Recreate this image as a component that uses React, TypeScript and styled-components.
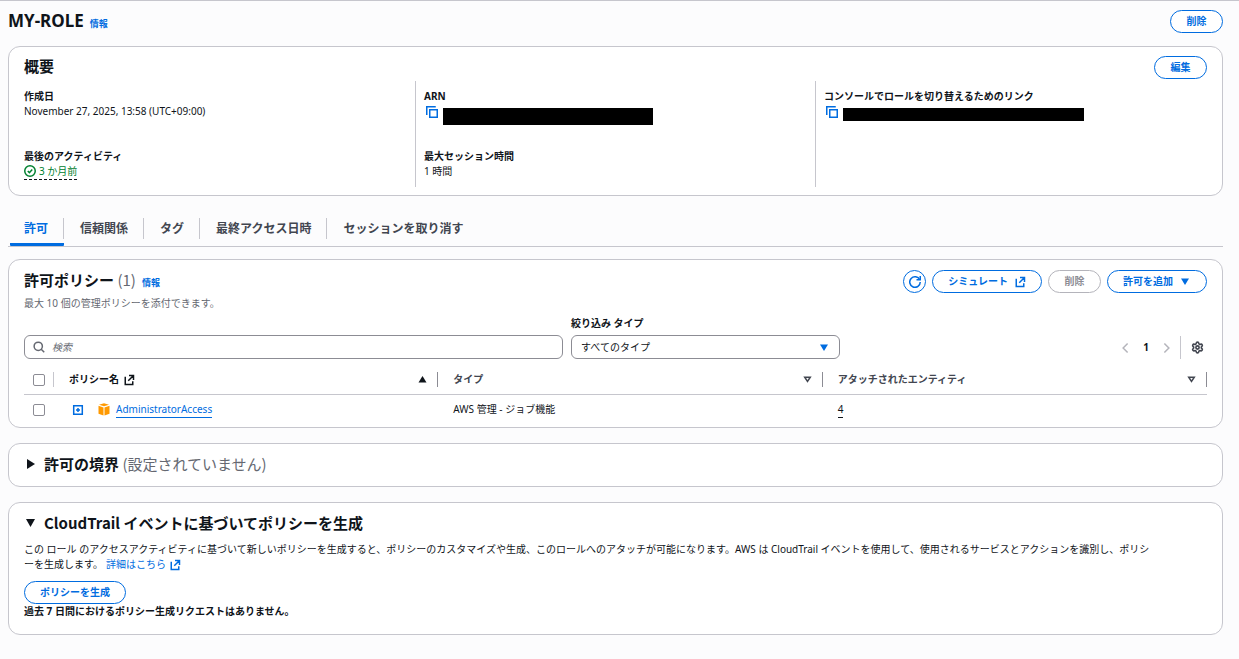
import React from 'react';
import styled, { createGlobalStyle } from 'styled-components';
import { Settings } from 'lucide-react';

const color = {
  text: '#0f141a',
  secondary: '#424650',
  muted: '#656871',
  blue: '#006ce0',
  line: '#c6c6cd',
  control: '#8c8c94',
  green: '#00802f',
  page: '#fcfcfd',
};

const GlobalStyle = createGlobalStyle`
  *, *::before, *::after { box-sizing: border-box; }
  body {
    margin: 0;
    background: ${color.page};
    color: ${color.text};
    font: 400 10px/15px "Noto Sans", "Noto Sans CJK JP", sans-serif;
  }
  button, input, select { font: inherit; color: inherit; }
  h1, h2, p, dl, dd { margin: 0; }
  svg { display: block; flex: none; }
`;

const Page = styled.main`
  border-top: 1px solid ${color.line};
  padding: 9px 16px 24px 8px;
`;

const Bar = styled.header`
  display: flex;
  justify-content: space-between;
  align-items: flex-start;
  height: 23px;
`;

const PageTitle = styled.h1`
  font-size: 17px;
  line-height: 22px;
`;

const Title = styled.h2`
  min-height: 23px;
  font-family: "Noto Sans CJK JP", sans-serif;
  font-size: 15px;
  line-height: 20px;
`;

const Light = styled.span`
  font-weight: 400;
  color: ${color.muted};
`;

const InfoLink = styled.a`
  margin-left: 6px;
  font-size: 9px;
  line-height: 9px;
  font-weight: 700;
  color: ${color.blue};
  text-decoration: none;
`;

const TextLink = styled.a<{ $underlined?: boolean }>`
  color: ${color.blue};
  text-decoration: none;
  border-bottom: ${(p) => (p.$underlined ? '1px solid' : '0')};
`;

const CountLink = styled(TextLink)`
  color: ${color.text};
`;

const Button = styled.button<{ $round?: boolean }>`
  display: inline-flex;
  align-items: center;
  justify-content: center;
  gap: 6px;
  height: 23px;
  min-width: ${(p) => (p.$round ? '23px' : '53px')};
  padding: 0 ${(p) => (p.$round ? '0' : '15px')};
  border: 1px solid ${color.blue};
  border-radius: 12px;
  background: #fff;
  color: ${color.blue};
  font-weight: 700;
  white-space: nowrap;
  &:disabled {
    border-color: #b4b4bb;
    color: ${color.control};
  }
`;

const Card = styled.section<{ $tall?: boolean }>`
  padding: ${(p) => (p.$tall ? '10px 15px 15px' : '10px 15px 9px')};
  border: 1px solid ${color.line};
  border-radius: 12px;
  background: #fff;
  & + & { margin-top: 15px; }
`;

const SummaryCard = styled(Card)`
  margin-top: 13px;
  padding: 9px 15px 8px;
`;

const Columns = styled.dl`
  display: flex;
  margin-top: 2px;
`;

const Column = styled.div`
  display: flex;
  flex: 1 1 0;
  flex-direction: column;
  gap: 30px;
  box-sizing: content-box;
  padding: 8px;
  border-left: 1px solid ${color.line};
  &:first-child {
    padding-left: 0;
    border-left: 0;
  }
  &:last-child { padding-right: 0; }
`;

const Term = styled.dt`
  font-weight: 700;
`;

const Value = styled.dd`
  display: flex;
  align-items: center;
  height: 15px;
`;

const Status = styled.span`
  display: inline-flex;
  align-items: center;
  gap: 3px;
  height: 17px;
  color: ${color.green};
  border-bottom: 1px dashed ${color.text};
`;

const IconButton = styled.button`
  display: inline-flex;
  align-items: center;
  justify-content: center;
  min-width: 12px;
  height: 15px;
  padding: 0;
  border: 0;
  background: none;
  color: ${color.secondary};
  &:disabled { color: #b4b4bb; }
`;

const CopyButton = styled(IconButton)`
  margin: 0 5px 0 2px;
  color: ${color.blue};
`;

const Redaction = styled.span<{ $w: number; $h: number }>`
  width: ${(p) => p.$w}px;
  height: ${(p) => p.$h}px;
  margin-top: ${(p) => p.$h - 7}px;
  background: #000;
`;

const Tabs = styled.div`
  display: flex;
  margin: 14px 0 12px;
  padding-left: 2px;
  border-bottom: 1px solid ${color.line};
`;

const Tab = styled.button<{ $active?: boolean }>`
  display: flex;
  height: 36px;
  padding: 8px 0 4px 16px;
  border: 0;
  border-bottom: 3px solid ${(p) => (p.$active ? color.blue : 'transparent')};
  border-radius: 1px;
  background: none;
  color: ${(p) => (p.$active ? color.blue : color.secondary)};
  font-size: 12px;
  line-height: 21px;
  font-weight: 700;
  &:first-child { padding-left: 14px; }
  span {
    padding-right: 15px;
    border-right: 1px solid ${color.line};
  }
  &:last-child span { border-right: 0; }
`;

const Actions = styled.div`
  display: flex;
  gap: 6px;
`;

const PolicyCard = styled(Card)`
  padding: 10px 15px 4px;
`;

const Description = styled.p`
  margin-top: 3px;
  color: ${color.muted};
`;

const Filters = styled.div`
  display: flex;
  align-items: flex-end;
  gap: 8px;
  margin-top: 5px;
`;

const SearchBox = styled.label`
  display: flex;
  align-items: center;
  flex: 0 1 539px;
  height: 24px;
  padding: 0 8px;
  gap: 7px;
  border: 1px solid ${color.control};
  border-radius: 6px;
  background: #fff;
  color: ${color.muted};
  input {
    flex: 1;
    min-width: 0;
    padding: 0;
    border: 0;
    outline: 0;
    background: none;
  }
  input::placeholder {
    color: ${color.muted};
    font-style: italic;
  }
`;

const Field = styled.div`
  display: flex;
  flex-direction: column;
  flex: 0 1 269px;
  gap: 4px;
  label { font-weight: 700; }
`;

const SelectBox = styled.div`
  display: grid;
  align-items: center;
  color: ${color.blue};
  select, svg { grid-area: 1 / 1; }
  select {
    height: 24px;
    padding: 0 9px;
    border: 1px solid ${color.control};
    border-radius: 6px;
    background: #fff;
    color: ${color.text};
    appearance: none;
  }
  svg {
    justify-self: end;
    margin-right: 10px;
    pointer-events: none;
  }
`;

const Pager = styled.nav`
  display: flex;
  align-items: center;
  gap: 9px;
  height: 23px;
  margin-left: auto;
  padding-right: 3px;
`;

const PagerRule = styled.span`
  align-self: stretch;
  width: 1px;
  margin-right: 1px;
  margin-left: -2px;
  background: ${color.line};
`;

const PageNumber = styled(IconButton)`
  color: ${color.text};
  font-weight: 700;
`;

const Table = styled.table`
  width: 100%;
  margin-top: 5px;
  border-collapse: collapse;
  table-layout: fixed;
  th, td {
    padding: 2px 0 0;
    text-align: left;
  }
  th { color: ${color.secondary}; }
  thead tr {
    height: 30px;
    border-bottom: 1px solid ${color.line};
  }
  tbody tr { height: 29px; }
`;

const CheckColumn = styled.col`
  width: 30px;
`;

const HeadCell = styled.div<{ $sorted?: boolean }>`
  display: flex;
  align-items: center;
  gap: 4px;
  height: 15px;
  padding-left: 15px;
  padding-right: 10px;
  border-right: 1px solid ${color.control};
  color: ${(p) => (p.$sorted ? color.text : 'inherit')};
  svg:last-child { margin-left: auto; }
`;

const CheckCell = styled.div<{ $ruled?: boolean }>`
  display: flex;
  align-items: center;
  height: 15px;
  padding-left: 9px;
  border-right: ${(p) => (p.$ruled ? `1px solid ${color.line}` : '0')};
`;

const Cell = styled.div`
  display: flex;
  align-items: center;
  padding-left: 15px;
`;

const PolicyName = styled(Cell)`
  gap: 6px;
  padding-left: 18px;
`;

const ExpandButton = styled(IconButton)`
  margin-right: 8px;
  color: ${color.blue};
`;

const Checkbox = styled.input.attrs({ type: 'checkbox' })`
  appearance: none;
  width: 12px;
  height: 12px;
  margin: 0;
  border: 1px solid ${color.control};
  border-radius: 2px;
  background: #fff;
`;

const Toggle = styled.button`
  display: flex;
  align-items: center;
  gap: 7px;
  padding: 0;
  border: 0;
  background: none;
  font-weight: 700;
  text-align: left;
`;

const Prose = styled.p`
  margin: 6px 0 9px;
  padding-right: 48px;
`;

const MoreLink = styled(TextLink)`
  display: inline-flex;
  align-items: center;
  gap: 3px;
  height: 15px;
  margin-left: 3px;
  vertical-align: top;
`;

const Note = styled.p`
  font-weight: 700;
`;

const ExternalIcon = () => (
  <svg width="12" height="12" viewBox="0 0 16 16" fill="none" stroke="currentColor" strokeWidth="2" aria-hidden="true">
    <path d="M3 3.5V14h10v-4.5M8 2h6v6M14 2 7 9" />
  </svg>
);

const CopyIcon = () => (
  <svg width="12" height="12" viewBox="0 0 16 16" fill="none" stroke="currentColor" strokeWidth="2" aria-hidden="true">
    <path d="M1 12V1h12" />
    <path d="M5 5h10v10H5z" />
  </svg>
);

const CheckIcon = () => (
  <svg width="12" height="12" viewBox="0 0 16 16" fill="none" stroke="currentColor" strokeWidth="2" aria-hidden="true">
    <circle cx="8" cy="8" r="7" />
    <path d="m5 8 2.2 2.2L11 6" />
  </svg>
);

const RefreshIcon = () => (
  <svg width="12" height="12" viewBox="0 0 16 16" fill="none" stroke="currentColor" strokeWidth="2" aria-hidden="true">
    <path d="M10 5h5V0" />
    <path d="M15 8a7 7 0 1 1-.7-3" />
  </svg>
);

const SearchIcon = () => (
  <svg width="12" height="12" viewBox="0 0 16 16" fill="none" stroke="currentColor" strokeWidth="2" aria-hidden="true">
    <circle cx="7" cy="7" r="5.5" />
    <path d="m11 11 4 4" />
  </svg>
);

const DownIcon = () => (
  <svg width="12" height="7" viewBox="0 0 12 7" fill="currentColor" aria-hidden="true">
    <path d="M2 .5h8L6 7z" />
  </svg>
);

const RightIcon = () => (
  <svg width="13" height="10" viewBox="0 0 13 10" fill="currentColor" aria-hidden="true">
    <path d="M3 0v10l8-5z" />
  </svg>
);

const OpenIcon = () => (
  <svg width="13" height="10" viewBox="0 0 13 10" fill="currentColor" aria-hidden="true">
    <path d="M2 1h9L6.500 9z" />
  </svg>
);

const SortedIcon = () => (
  <svg width="9" height="7" viewBox="0 0 9 7" fill="currentColor" aria-hidden="true">
    <path d="M4.5 0 8.5 6.5h-8z" />
  </svg>
);

const SortIcon = () => (
  <svg width="9" height="7" viewBox="0 0 9 7" fill="none" stroke="currentColor" strokeWidth="1.5" aria-hidden="true">
    <path d="M1.7 1.2h5.6L4.5 5.5z" />
  </svg>
);

const ChevronIcon = ({ right }: { right?: boolean }) => (
  <svg width="12" height="12" viewBox="0 0 16 16" fill="none" stroke="currentColor" strokeWidth="2" aria-hidden="true">
    <path d={right ? 'm4.5 2 6 6-6 6' : 'm11.5 2-6 6 6 6'} />
  </svg>
);

const PlusBoxIcon = () => (
  <svg width="12" height="12" viewBox="0 0 12 12" fill="none" stroke="currentColor" strokeWidth="1.5" aria-hidden="true">
    <path d="M1.7 1.7h8.6v8.6H1.7zM6 4v4M4 6h4" />
  </svg>
);

const BoxIcon = () => (
  <svg width="12" height="13" viewBox="0 0 12 13" fill="#ff9900" aria-hidden="true">
    <path d="M6 .3 11 1.8 6 3.3 1 1.8z" />
    <path d="M.5 2.7 5.5 4.4v8.1L.5 10.8zM11.5 2.7 6.5 4.4v8.1l5-1.7z" />
  </svg>
);

const tabs = ['許可', '信頼関係', 'タグ', '最終アクセス日時', 'セッションを取り消す'];

export default function App() {
  return (
    <>
      <GlobalStyle />
      <Page>
        <Bar>
          <PageTitle>
            MY-ROLE
            <InfoLink href="#info">情報</InfoLink>
          </PageTitle>
          <Button>削除</Button>
        </Bar>

        <SummaryCard>
          <Bar>
            <Title>概要</Title>
            <Button>編集</Button>
          </Bar>
          <Columns>
            <Column>
              <div>
                <Term>作成日</Term>
                <Value>November 27, 2025, 13:58 (UTC+09:00)</Value>
              </div>
              <div>
                <Term>最後のアクティビティ</Term>
                <Value>
                  <Status>
                    <CheckIcon />3 か月前
                  </Status>
                </Value>
              </div>
            </Column>
            <Column>
              <div>
                <Term>ARN</Term>
                <Value>
                  <CopyButton aria-label="ARN をコピー"><CopyIcon /></CopyButton>
                  <Redaction $w={210} $h={17} />
                </Value>
              </div>
              <div>
                <Term>最大セッション時間</Term>
                <Value>1 時間</Value>
              </div>
            </Column>
            <Column>
              <div>
                <Term>コンソールでロールを切り替えるためのリンク</Term>
                <Value>
                  <CopyButton aria-label="リンクをコピー"><CopyIcon /></CopyButton>
                  <Redaction $w={241} $h={13} />
                </Value>
              </div>
            </Column>
          </Columns>
        </SummaryCard>

        <Tabs role="tablist">
          {tabs.map((name, i) => (
            <Tab key={name} role="tab" aria-selected={i === 0} $active={i === 0}>
              <span>{name}</span>
            </Tab>
          ))}
        </Tabs>

        <PolicyCard>
          <Bar>
            <Title>
              許可ポリシー <Light>(1)</Light>
              <InfoLink href="#policies-info">情報</InfoLink>
            </Title>
            <Actions>
              <Button $round aria-label="更新"><RefreshIcon /></Button>
              <Button>シミュレート<ExternalIcon /></Button>
              <Button disabled>削除</Button>
              <Button>許可を追加<DownIcon /></Button>
            </Actions>
          </Bar>
          <Description>最大 10 個の管理ポリシーを添付できます。</Description>
          <Filters>
            <SearchBox>
              <SearchIcon />
              <input type="text" placeholder="検索" aria-label="検索" />
            </SearchBox>
            <Field>
              <label htmlFor="type-filter">絞り込み タイプ</label>
              <SelectBox>
                <select id="type-filter">
                  <option>すべてのタイプ</option>
                </select>
                <DownIcon />
              </SelectBox>
            </Field>
            <Pager aria-label="ページ">
              <IconButton disabled aria-label="前のページ"><ChevronIcon /></IconButton>
              <PageNumber>1</PageNumber>
              <IconButton disabled aria-label="次のページ"><ChevronIcon right /></IconButton>
              <PagerRule />
              <IconButton aria-label="設定"><Settings size={13} strokeWidth={3} /></IconButton>
            </Pager>
          </Filters>
          <Table>
            <colgroup>
              <CheckColumn />
              <col />
              <col />
              <col />
            </colgroup>
            <thead>
              <tr>
                <th><CheckCell $ruled><Checkbox aria-label="すべて選択" /></CheckCell></th>
                <th><HeadCell $sorted>ポリシー名<ExternalIcon /><SortedIcon /></HeadCell></th>
                <th><HeadCell>タイプ<SortIcon /></HeadCell></th>
                <th><HeadCell>アタッチされたエンティティ<SortIcon /></HeadCell></th>
              </tr>
            </thead>
            <tbody>
              <tr>
                <td><CheckCell><Checkbox aria-label="AdministratorAccess を選択" /></CheckCell></td>
                <td>
                  <PolicyName>
                    <ExpandButton aria-label="展開"><PlusBoxIcon /></ExpandButton>
                    <BoxIcon />
                    <TextLink href="#administrator-access" $underlined>AdministratorAccess</TextLink>
                  </PolicyName>
                </td>
                <td><Cell>AWS 管理 - ジョブ機能</Cell></td>
                <td><Cell><CountLink href="#entities" $underlined>4</CountLink></Cell></td>
              </tr>
            </tbody>
          </Table>
        </PolicyCard>

        <Card>
          <Title>
            <Toggle aria-expanded="false">
              <RightIcon />
              <span>許可の境界 <Light>(設定されていません)</Light></span>
            </Toggle>
          </Title>
        </Card>

        <Card $tall>
          <Title>
            <Toggle aria-expanded="true">
              <OpenIcon />
              CloudTrail イベントに基づいてポリシーを生成
            </Toggle>
          </Title>
          <Prose>
            この ロール のアクセスアクティビティに基づいて新しいポリシーを生成すると、ポリシーのカスタマイズや生成、このロールへのアタッチが可能になります。AWS は CloudTrail イベントを使用して、使用されるサービスとアクションを識別し、ポリシーを生成します。
            <MoreLink href="#learn-more">詳細はこちら<ExternalIcon /></MoreLink>
          </Prose>
          <Button>ポリシーを生成</Button>
          <Note>過去 7 日間におけるポリシー生成リクエストはありません。</Note>
        </Card>
      </Page>
    </>
  );
}
